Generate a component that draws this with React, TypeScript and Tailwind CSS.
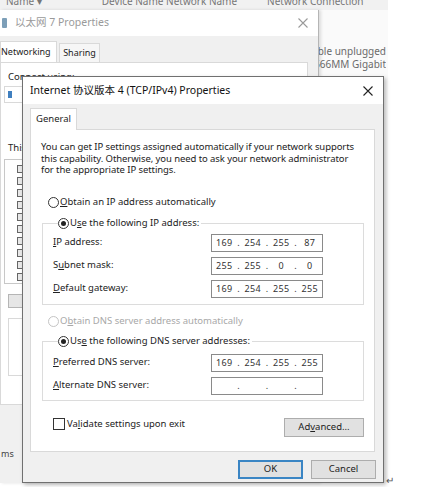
import { Fragment } from "react";

const IpField = ({ parts }: { parts: string[] }) => (
  <div className="flex h-[18px] w-[112px] items-center border border-[#8a8a8a] bg-white text-[9px] text-[#333] tracking-[0.3px]">
    {parts.map((p, i) => (
      <Fragment key={i}>
        <span className="flex-1 text-center">{p}</span>
        {i < 3 && <span className="w-[4px] text-center">.</span>}
      </Fragment>
    ))}
  </div>
);

const Radio = ({ checked, disabled }: { checked?: boolean; disabled?: boolean }) => (
  <span
    className={`flex h-[11px] w-[11px] items-center justify-center rounded-full border bg-white ${
      disabled ? "border-[#c4c4c4]" : "border-[#333]"
    }`}
  >
    {checked && <span className="h-[5px] w-[5px] rounded-full bg-[#222]" />}
  </span>
);

const FieldRow = ({ label, parts }: { label: React.ReactNode; parts: string[] }) => (
  <div className="flex h-[18px] items-center justify-between">
    <span>{label}</span>
    <IpField parts={parts} />
  </div>
);

const CloseX = ({ color }: { color: string }) => (
  <svg width="10" height="10" viewBox="0 0 10 10" fill="none" stroke={color} strokeWidth="1.1">
    <path d="M0.5 0.5 L9.5 9.5 M9.5 0.5 L0.5 9.5" />
  </svg>
);

export default function App() {
  return (
    <div className="relative h-[487px] w-[438px] overflow-hidden bg-white font-['Noto_Sans','Noto_Sans_CJK_SC',sans-serif] text-[9.5px] text-[#222]">
      {/* network connections window behind */}
      <div className="absolute left-0 top-0 h-[483px] w-[388px] bg-[#fafafa]">
        <div className="flex h-[10px] items-start gap-[30px] overflow-hidden whitespace-nowrap bg-[#f1f1f1] pl-[6px] text-[10px] leading-[12px] text-[#777]">
          <span className="-mt-[5px]">Name ▾</span>
          <span className="-mt-[5px] pl-[30px]">Device Name Network Name</span>
          <span className="-mt-[5px]">Network Connection</span>
          <span className="-mt-[5px]">Re</span>
        </div>
        <div className="ml-[200px] mt-[35px] flex w-[186px] flex-col items-end overflow-hidden text-[10px] leading-[13px] text-[#6a6a6a]">
          <div className="whitespace-nowrap">Network cable unplugged</div>
          <div className="whitespace-nowrap">Intel(R) 82566MM Gigabit</div>
        </div>
      </div>

      {/* 以太网 7 Properties */}
      <div className="absolute left-0 top-[10px] flex h-[473px] w-[319px] flex-col border-r border-[#b5b5b5] bg-[#f0f0f0] shadow-[2px_0_3px_rgba(0,0,0,0.12)]">
        <div className="flex h-[26px] items-center justify-between bg-white pl-[2px] pr-[10px]">
          <div className="flex items-center gap-[8px] text-[10.5px] text-[#9a9a9a]">
            <span className="h-[10px] w-[5px] rounded-[1px] bg-[#7d9fb8]" />
            <span>以太网 7 Properties</span>
          </div>
          <CloseX color="#9a9a9a" />
        </div>
        <div className="flex h-[26px] items-end">
          <div className="flex h-[21px] w-[57px] items-center border border-b-0 border-[#d9d9d9] bg-white text-[9px]">
            Networking
          </div>
          <div className="ml-[2px] flex h-[19px] w-[41px] items-center justify-center border border-b-0 border-[#d9d9d9] bg-[#f6f6f6] text-[9px]">
            Sharing
          </div>
        </div>
        <div className="mr-[10px] h-[343px] border border-[#d9d9d9] bg-white pl-[7px] pt-[7px] text-[9.5px]">
          <div>Connect using:</div>
          <div className="-ml-[4px] mt-[2px] flex h-[17px] items-center border border-[#d9d9d9] pl-[3px]">
            <span className="h-[7px] w-[4px] bg-[#3f7fbf]" />
          </div>
          <div className="mt-[38px]">This connection uses the following items:</div>
          <div className="-ml-[4px] mt-[3px] flex h-[125px] flex-col gap-[4px] border border-[#c8c8c8] pl-[12px] pt-[5px]">
            {Array.from({ length: 10 }).map((_, i) => (
              <span key={i} className="h-[8px] w-[7px] border border-[#666] bg-[#e8e8e8]" />
            ))}
          </div>
          <div className="mt-[10px] h-[14px] w-[60px] border border-[#b5b5b5] bg-[#e6e6e6]" />
          <div className="mt-[10px] h-[58px] border border-[#d9d9d9]" />
        </div>
        <div className="mt-[42px] pl-[1px] text-[9px] text-[#444]">ms</div>
      </div>

      {/* Internet 协议版本 4 (TCP/IPv4) Properties */}
      <div className="absolute left-[22px] top-[76px] flex h-[407px] w-[362px] flex-col border border-[#707070] bg-[#f0f0f0] shadow-[2px_2px_4px_rgba(0,0,0,0.25)]">
        <div className="flex h-[27px] items-center justify-between bg-white pl-[7px] pr-[10px]">
          <span className="text-[10.5px] text-[#111]">Internet 协议版本 4 (TCP/IPv4) Properties</span>
          <CloseX color="#222" />
        </div>
        <div className="px-[7px] pt-[4px]">
          <div className="relative z-10 -mb-px flex h-[22px] w-[47px] items-center justify-center border border-b-0 border-[#d9d9d9] bg-white">
            General
          </div>
          <div className="h-[323px] w-[345px] border border-[#d9d9d9] bg-white px-[11px]">
            <p className="-ml-[1px] pt-[11px] leading-[11.5px] tracking-[-0.08px]">
              You can get IP settings assigned automatically if your network supports
              <br />
              this capability. Otherwise, you need to ask your network administrator
              <br />
              for the appropriate IP settings.
            </p>

            <div className="ml-[6px] mt-[20px] flex h-[14px] items-center gap-[1px]">
              <Radio />
              <span>
                <u>O</u>btain an IP address automatically
              </span>
            </div>

            <fieldset className="mt-[7px] flex w-[322px] flex-col gap-[5px] border border-[#dcdcdc] pb-[6px] pl-[10px] pr-[40px] pt-[3px]">
              <legend className="ml-[5px] flex h-[14px] items-center gap-[1px] bg-white pr-[2px]">
                <Radio checked />
                <span>
                  U<u>s</u>e the following IP address:
                </span>
              </legend>
              <FieldRow label={<><u>I</u>P address:</>} parts={["169", "254", "255", "87"]} />
              <FieldRow label={<>S<u>u</u>bnet mask:</>} parts={["255", "255", "0", "0"]} />
              <FieldRow label={<><u>D</u>efault gateway:</>} parts={["169", "254", "255", "255"]} />
            </fieldset>

            <div className="ml-[6px] mt-[10px] flex h-[14px] items-center gap-[1px] text-[#a8a8a8]">
              <Radio disabled />
              <span>
                O<u>b</u>tain DNS server address automatically
              </span>
            </div>

            <fieldset className="mt-[6px] flex w-[322px] flex-col gap-[5px] border border-[#dcdcdc] pb-[5px] pl-[10px] pr-[40px] pt-[5px]">
              <legend className="ml-[5px] flex h-[14px] items-center gap-[1px] bg-white pr-[2px]">
                <Radio checked />
                <span>
                  Us<u>e</u> the following DNS server addresses:
                </span>
              </legend>
              <FieldRow label={<><u>P</u>referred DNS server:</>} parts={["169", "254", "255", "255"]} />
              <FieldRow label={<><u>A</u>lternate DNS server:</>} parts={["", "", "", ""]} />
            </fieldset>

            <div className="mt-[17px] flex h-[19px] w-[322px] items-start justify-between">
              <div className="ml-[11px] mt-[-1px] flex items-center gap-[2px]">
                <span className="h-[12px] w-[12px] border border-[#333] bg-white" />
                <span>
                  Va<u>l</u>idate settings upon exit
                </span>
              </div>
              <button className="flex h-[19px] w-[80px] items-center justify-center border border-[#adadad] bg-[#e1e1e1]">
                Ad<u>v</u>anced...
              </button>
            </div>
          </div>
        </div>
        <div className="mt-[8px] flex justify-end gap-[8px] pr-[7px]">
          <button className="flex h-[19px] w-[65px] items-center justify-center border-2 border-[#3a85c4] bg-[#e1e1e1]">
            OK
          </button>
          <button className="flex h-[19px] w-[65px] items-center justify-center border border-[#adadad] bg-[#e1e1e1]">
            Cancel
          </button>
        </div>
      </div>

      <span className="absolute left-[386px] top-[473px] text-[10px] text-[#555]">↵</span>
    </div>
  );
}
